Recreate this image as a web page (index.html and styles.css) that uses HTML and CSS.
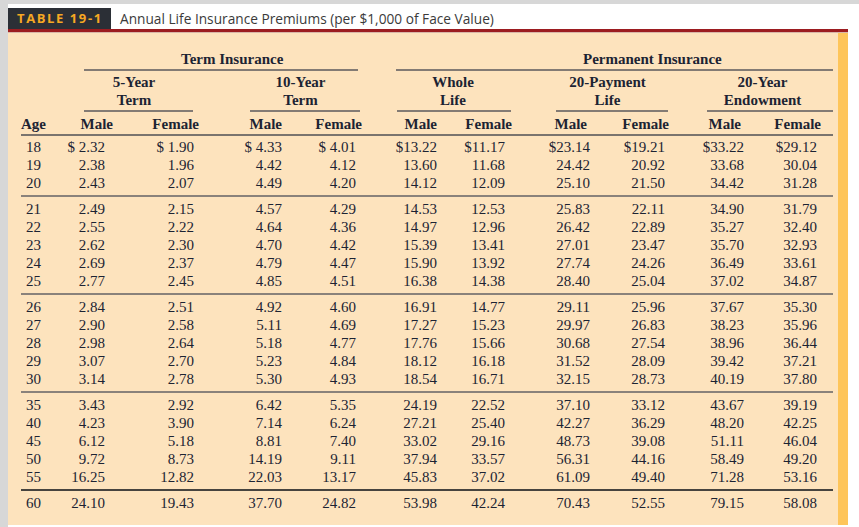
FILE: index.html
```html
<!DOCTYPE html>
<html lang="en">
<head>
<meta charset="utf-8">
<title>Table 19-1</title>
<link rel="stylesheet" href="styles.css">
</head>
<body>
<div class="page">
  <div class="titlebar">
    <div class="tag">TABLE 19-1</div>
    <div class="caption">Annual Life Insurance Premiums (per $1,000 of Face Value)</div>
  </div>
  <div class="rule"></div>
  <div class="panel">
    <div class="table">
      <div class="grid hdr1">
        <div class="grp grp-term">Term Insurance</div>
        <div class="grp grp-perm">Permanent Insurance</div>
      </div>
      <div class="grid hdr2">
        <div class="sub sub-5">5-Year<br>Term</div>
        <div class="sub sub-10">10-Year<br>Term</div>
        <div class="sub sub-wl">Whole<br>Life</div>
        <div class="sub sub-20p">20-Payment<br>Life</div>
        <div class="sub sub-end">20-Year<br>Endowment</div>
      </div>
      <div class="grid hdr3">
        <div>Age</div><div>Male</div><div>Female</div><div>Male</div><div>Female</div><div>Male</div><div>Female</div><div>Male</div><div>Female</div><div>Male</div><div>Female</div>
      </div>
      <div class="body">
        <div class="rows">
          <div class="grid row"><div>18</div><div>$ 2.32</div><div>$ 1.90</div><div>$ 4.33</div><div>$ 4.01</div><div>$13.22</div><div>$11.17</div><div>$23.14</div><div>$19.21</div><div>$33.22</div><div>$29.12</div></div>
          <div class="grid row"><div>19</div><div>2.38</div><div>1.96</div><div>4.42</div><div>4.12</div><div>13.60</div><div>11.68</div><div>24.42</div><div>20.92</div><div>33.68</div><div>30.04</div></div>
          <div class="grid row"><div>20</div><div>2.43</div><div>2.07</div><div>4.49</div><div>4.20</div><div>14.12</div><div>12.09</div><div>25.10</div><div>21.50</div><div>34.42</div><div>31.28</div></div>
        </div>
        <div class="rows sep">
          <div class="grid row"><div>21</div><div>2.49</div><div>2.15</div><div>4.57</div><div>4.29</div><div>14.53</div><div>12.53</div><div>25.83</div><div>22.11</div><div>34.90</div><div>31.79</div></div>
          <div class="grid row"><div>22</div><div>2.55</div><div>2.22</div><div>4.64</div><div>4.36</div><div>14.97</div><div>12.96</div><div>26.42</div><div>22.89</div><div>35.27</div><div>32.40</div></div>
          <div class="grid row"><div>23</div><div>2.62</div><div>2.30</div><div>4.70</div><div>4.42</div><div>15.39</div><div>13.41</div><div>27.01</div><div>23.47</div><div>35.70</div><div>32.93</div></div>
          <div class="grid row"><div>24</div><div>2.69</div><div>2.37</div><div>4.79</div><div>4.47</div><div>15.90</div><div>13.92</div><div>27.74</div><div>24.26</div><div>36.49</div><div>33.61</div></div>
          <div class="grid row"><div>25</div><div>2.77</div><div>2.45</div><div>4.85</div><div>4.51</div><div>16.38</div><div>14.38</div><div>28.40</div><div>25.04</div><div>37.02</div><div>34.87</div></div>
        </div>
        <div class="rows sep">
          <div class="grid row"><div>26</div><div>2.84</div><div>2.51</div><div>4.92</div><div>4.60</div><div>16.91</div><div>14.77</div><div>29.11</div><div>25.96</div><div>37.67</div><div>35.30</div></div>
          <div class="grid row"><div>27</div><div>2.90</div><div>2.58</div><div>5.11</div><div>4.69</div><div>17.27</div><div>15.23</div><div>29.97</div><div>26.83</div><div>38.23</div><div>35.96</div></div>
          <div class="grid row"><div>28</div><div>2.98</div><div>2.64</div><div>5.18</div><div>4.77</div><div>17.76</div><div>15.66</div><div>30.68</div><div>27.54</div><div>38.96</div><div>36.44</div></div>
          <div class="grid row"><div>29</div><div>3.07</div><div>2.70</div><div>5.23</div><div>4.84</div><div>18.12</div><div>16.18</div><div>31.52</div><div>28.09</div><div>39.42</div><div>37.21</div></div>
          <div class="grid row"><div>30</div><div>3.14</div><div>2.78</div><div>5.30</div><div>4.93</div><div>18.54</div><div>16.71</div><div>32.15</div><div>28.73</div><div>40.19</div><div>37.80</div></div>
        </div>
        <div class="rows sep">
          <div class="grid row"><div>35</div><div>3.43</div><div>2.92</div><div>6.42</div><div>5.35</div><div>24.19</div><div>22.52</div><div>37.10</div><div>33.12</div><div>43.67</div><div>39.19</div></div>
          <div class="grid row"><div>40</div><div>4.23</div><div>3.90</div><div>7.14</div><div>6.24</div><div>27.21</div><div>25.40</div><div>42.27</div><div>36.29</div><div>48.20</div><div>42.25</div></div>
          <div class="grid row"><div>45</div><div>6.12</div><div>5.18</div><div>8.81</div><div>7.40</div><div>33.02</div><div>29.16</div><div>48.73</div><div>39.08</div><div>51.11</div><div>46.04</div></div>
          <div class="grid row"><div>50</div><div>9.72</div><div>8.73</div><div>14.19</div><div>9.11</div><div>37.94</div><div>33.57</div><div>56.31</div><div>44.16</div><div>58.49</div><div>49.20</div></div>
          <div class="grid row"><div>55</div><div>16.25</div><div>12.82</div><div>22.03</div><div>13.17</div><div>45.83</div><div>37.02</div><div>61.09</div><div>49.40</div><div>71.28</div><div>53.16</div></div>
        </div>
        <div class="rows sep sep-dark">
          <div class="grid row"><div>60</div><div>24.10</div><div>19.43</div><div>37.70</div><div>24.82</div><div>53.98</div><div>42.24</div><div>70.43</div><div>52.55</div><div>79.15</div><div>58.08</div></div>
        </div>
      </div>
    </div>
  </div>
</div>
</body>
</html>
```
FILE: styles.css
```css
html, body {
  margin: 0;
  padding: 0;
}
body {
  background: #d7d7d7;
  width: 859px;
  height: 527px;
  overflow: hidden;
}
.page {
  margin: 4px 0 0 8px;
  width: 851px;
  height: 523px;
  background: #ffffff;
}
.titlebar {
  display: flex;
  align-items: flex-end;
  height: 25px;
}
.tag {
  box-sizing: border-box;
  width: 103px;
  height: 21px;
  background: #2b2f36;
  color: #f6a823;
  font-family: "Open Sans", "DejaVu Sans", sans-serif;
  font-weight: 700;
  font-size: 13px;
  letter-spacing: 1.6px;
  line-height: 21px;
  padding-left: 9px;
  white-space: nowrap;
}
.caption {
  margin-left: 9px;
  font-family: "Open Sans", "DejaVu Sans", sans-serif;
  font-size: 13.7px;
  color: #3a3a3a;
  line-height: 21px;
  height: 21px;
  white-space: nowrap;
}
.rule {
  width: 840px;
  height: 3px;
  background: #9c1c20;
  border-bottom: 1px solid #d8b7a9;
}
.panel {
  box-sizing: border-box;
  width: 840px;
  height: 492px;
  background: #fde3bd;
  border-right: 10px solid #fec55a;
  padding: 17px 0 0 13px;
  font-family: "Liberation Serif", "Times New Roman", serif;
  font-size: 15px;
  line-height: 18px;
  color: #1c2333;
}
.table {
  width: 812px;
}
.grid {
  display: grid;
  grid-template-columns: 39px 53px 86px 83px 80px 75px 75px 78px 79px 75px 89px;
}
.hdr1, .hdr2, .hdr3 {
  font-weight: 700;
}
.grp {
  padding-bottom: 1px;
  border-bottom: 2px solid #837b74;
  white-space: nowrap;
}
.grp-term {
  grid-column: 2 / 6;
  margin: 0 4px 0 24px;
  padding-left: 97px;
}
.grp-perm {
  grid-column: 6 / 12;
  margin-left: 34px;
  padding-left: 187px;
}
.hdr2 {
  margin-top: 2px;
}
.sub {
  text-align: center;
  padding-bottom: 1px;
  border-bottom: 2px solid #837b74;
  white-space: nowrap;
}
.sub-5 {
  grid-column: 2 / 4;
  margin: 0 6px 0 24px;
  padding-right: 9px;
}
.sub-10 {
  grid-column: 4 / 6;
  margin: 0 2px 0 51px;
  padding-right: 9px;
}
.sub-wl {
  grid-column: 6 / 8;
  margin: 0 1px 0 35px;
  padding-right: 2px;
}
.sub-20p {
  grid-column: 8 / 10;
  margin: 0 1px 0 44px;
  padding-right: 9px;
}
.sub-end {
  grid-column: 10 / 12;
  margin: 0 0 0 38px;
  padding-right: 15px;
}
.hdr3 {
  margin-top: 3px;
  padding-bottom: 1px;
  border-bottom: 2px solid #7a746e;
  text-align: right;
}
.hdr3 > :first-child {
  text-align: left;
}
.hdr3 > :nth-child(8) { padding-right: 3px; }
.hdr3 > :nth-child(10) { padding-right: 3px; }
.hdr3 > :nth-child(11) { padding-right: 12px; }
.body {
  padding-top: 2px;
}
.rows.sep {
  margin-top: 3px;
  border-top: 2px solid #8a827b;
  padding-top: 3px;
}
.rows.sep-dark {
  border-top-color: #47443f;
}
.row {
  height: 18px;
  text-align: right;
  white-space: nowrap;
}
.row > :first-child {
  text-align: left;
  padding-left: 5px;
}
.row > :nth-child(2) { padding-right: 8px; }
.row > :nth-child(3) { padding-right: 5px; }
.row > :nth-child(5) { padding-right: 6px; }
.row > :nth-child(7) { padding-right: 7px; }
.row > :nth-child(9) { padding-right: 4px; }
.row > :nth-child(11) { padding-right: 16px; }
```
